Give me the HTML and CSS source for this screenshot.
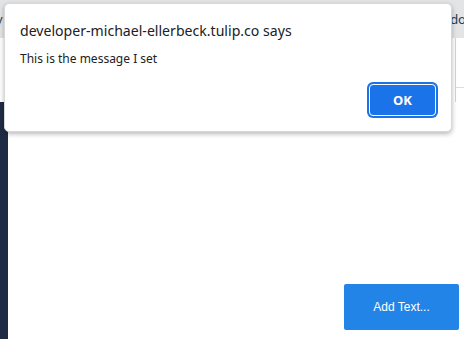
FILE: index.html
```html
<!DOCTYPE html>
<html>
<head>
<meta charset="utf-8">
<link rel="stylesheet" href="styles.css">
</head>
<body>
<div class="page">
  <div class="topbar">
    <span class="tb-left">y</span>
    <span class="tb-right">do</span>
  </div>
  <div class="header">
    <div class="header-main"></div>
    <div class="header-side"><div class="side-top"></div><div class="side-bottom"></div></div>
  </div>
  <div class="body">
    <div class="sidebar"></div>
    <div class="content">
      <button class="add-btn">Add Text...</button>
    </div>
  </div>
</div>
<div class="dialog">
  <div class="dlg-title">developer-michael-ellerbeck.tulip.co says</div>
  <div class="dlg-msg">This is the message I set</div>
  <div class="dlg-actions"><button class="ok-btn">OK</button></div>
</div>
</body>
</html>
```
FILE: styles.css
```css
html, body {
  margin: 0;
  padding: 0;
  width: 464px;
  height: 339px;
  overflow: hidden;
  background: #ffffff;
  font-family: "Noto Sans", "Open Sans", sans-serif;
}
.page {
  display: flex;
  flex-direction: column;
  height: 339px;
}
.topbar {
  height: 38px;
  background: #e3e4e6;
  display: flex;
  justify-content: space-between;
  align-items: center;
  font-size: 13px;
  color: #2a3a55;
  overflow: hidden;
}
.tb-left {
  margin-left: -4px;
}
.tb-right {
  margin-right: -2px;
}
.header {
  height: 64px;
  display: flex;
}
.header-main {
  flex: 1;
}
.header-side {
  width: 9px;
  display: flex;
  flex-direction: column;
}
.side-top {
  height: 63px;
  border-left: 1px solid #d4d4d4;
  border-bottom: 1px solid #dcdcdc;
}
.side-bottom {
  height: 18px;
  border-left: 1px solid #d4d4d4;
}
.body {
  flex: 1;
  display: flex;
}
.sidebar {
  width: 8px;
  background: #1f2b44;
}
.content {
  flex: 1;
  display: flex;
  justify-content: flex-end;
  align-items: flex-end;
  padding: 0 5px 9px 0;
}
.add-btn {
  width: 115px;
  height: 46px;
  background: #2384e8;
  border: none;
  border-radius: 2px;
  color: #ffffff;
  font-family: "Liberation Sans", Arial, sans-serif;
  font-size: 12px;
  padding: 0;
}
.dialog {
  position: absolute;
  left: 4px;
  top: 3px;
  width: 448px;
  height: 129px;
  box-sizing: border-box;
  background: #ffffff;
  border-radius: 5px;
  border: 1px solid #d8d8d8;
  box-shadow: 0 2px 5px rgba(0,0,0,0.28);
  padding: 17px 15px 0 15px;
  display: flex;
  flex-direction: column;
}
.dlg-title {
  font-size: 14.1px;
  color: #202124;
  line-height: 20px;
}
.dlg-msg {
  font-size: 12px;
  color: #202124;
  line-height: 16px;
  margin-top: 10px;
}
.dlg-actions {
  display: flex;
  justify-content: flex-end;
  margin-top: 17px;
}
.ok-btn {
  width: 67px;
  height: 32px;
  box-sizing: border-box;
  background: #1a73e8;
  border: 1px solid #ffffff;
  border-radius: 4px;
  box-shadow: 0 0 0 2px #1a73e8;
  color: #ffffff;
  font-family: "Noto Sans", "Open Sans", sans-serif;
  font-weight: 700;
  font-size: 13px;
  padding: 0;
  margin-right: 0;
}
```
